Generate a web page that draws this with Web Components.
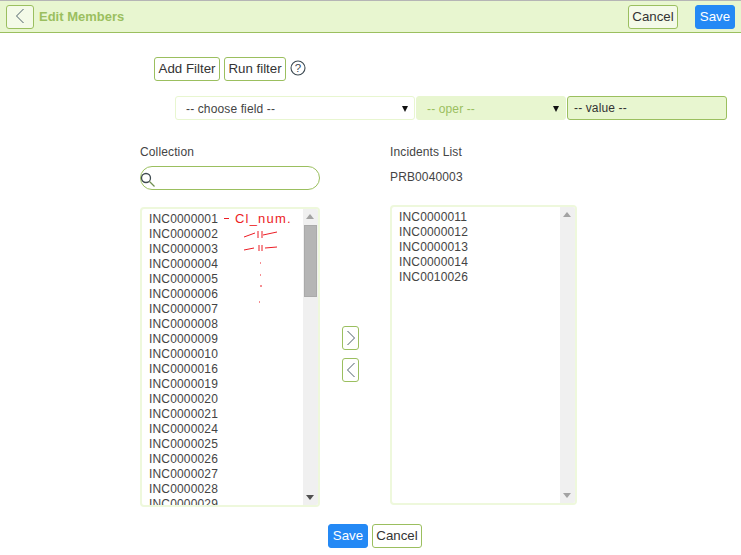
<!DOCTYPE html>
<html><head><meta charset="utf-8"><style>
html,body{margin:0;padding:0;background:#fff;overflow:hidden}
body{font:12px "Liberation Sans",Arial,sans-serif;color:#333;width:741px;height:555px}
</style></head><body>
<edit-page></edit-page>
<script>
const GL='#9bbf5f', LG='#e8f6d0';
function def(name,css,html,extra){
  customElements.define(name,class extends HTMLElement{
    constructor(){super();const s=this.attachShadow({mode:'open'});s.innerHTML='<style>'+css+'</style>'+html;}
    connectedCallback(){if(extra)extra.call(this);}
  });
}
const chevL='<svg width="10" height="16" viewBox="0 0 10 16"><path d="M8.5 1 1.5 8l7 7" fill="none" stroke="#4d5f6a" stroke-width="1"/></svg>';
const chevR='<svg width="10" height="16" viewBox="0 0 10 16"><path d="M1.5 1l7 7-7 7" fill="none" stroke="#4d5f6a" stroke-width="1"/></svg>';

def('x-btn',`:host{display:inline-flex;align-items:center;justify-content:center;box-sizing:border-box;height:24px;border:1px solid ${GL};border-radius:3px;background:#fff;color:#333;font:13.3px "Liberation Sans",Arial,sans-serif;white-space:nowrap;padding-bottom:1px}
:host([primary]){background:#2489f5;border-color:#2489f5;color:#fff}
:host([tint]){background:#f4fae8}`,'<slot></slot>');

def('x-header',`:host{display:flex;align-items:center;box-sizing:border-box;height:33px;background:${LG};border-top:1px solid #b5b5b5;border-bottom:1px solid ${GL};padding:0 6px}
h1{margin:0 0 0 5px;font:bold 13px "Liberation Sans",Arial,sans-serif;color:#9bbf5f;flex:1}
.g{width:17px}`,
`<x-btn style="width:28px" tint>${chevL}</x-btn><h1>Edit Members</h1><x-btn style="width:50px" tint>Cancel</x-btn><span class="g"></span><x-btn style="width:40px" primary>Save</x-btn>`);

def('x-select',`:host{display:flex;align-items:center;box-sizing:border-box;height:24px;border:1px solid ${LG};border-radius:3px;background:#fff;color:#444;font:12px "Liberation Sans",Arial,sans-serif;letter-spacing:.13px;padding:1px 6px 0 10px}
:host([tone="green"]){background:${LG};color:#9bbf5f}
:host([tone="input"]){background:${LG};border-color:${GL};color:#333;padding:0 6px}
span{flex:1}
i{width:0;height:0;border:3.5px solid transparent;border-top:6px solid #111;border-bottom:0}
:host([tone="input"]) i{display:none}`,'<span><slot></slot></span><i></i>');

def('x-list',`:host{display:block;position:relative;box-sizing:border-box;height:300px;border:2px solid #eef8dc;border-radius:4px;background:#fff;overflow:hidden}
.wrap{position:absolute;inset:0;overflow:hidden}
.items{padding:3px 0 0 7px;font:12px/15px "Liberation Sans",Arial,sans-serif;letter-spacing:.16px;color:#444}
.bar{position:absolute;top:0;right:0;bottom:0;width:15px;background:#f0f0f0}
.up,.dn{position:absolute;left:3px;width:0;height:0;border:4.5px solid transparent}
.up{top:5px;border-top:0;border-bottom:5px solid #a3a3a3}
.dn{bottom:5px;border-bottom:0;border-top:5px solid #505050}
:host([empty-bar]) .dn{border-top-color:#a3a3a3}
.thumb{position:absolute;left:1px;right:1px;top:16px;height:72px;background:#b5b5b5;border:1px solid #aaa;box-sizing:border-box}
:host([empty-bar]) .thumb{display:none}`,
`<div class="wrap"><div class="items"><slot></slot></div></div><div class="bar"><div class="up"></div><div class="thumb"></div><div class="dn"></div></div><slot name="over"></slot>`);

def('x-scribble',`:host{position:absolute;left:82px;top:2px;width:80px;height:100px;pointer-events:none}
svg{position:absolute;left:0;top:0}
span{position:absolute;left:11px;top:1px;font:13px/14px "Liberation Sans",sans-serif;letter-spacing:1.2px;color:#ec1c24;white-space:nowrap}`,
`<svg width="80" height="100" fill="none" stroke="#ec1c24" stroke-width="1"><path d="M0 7.500h5M20 26l11-4M34 20v7M38 20v7M39 24l14-3M20 39l10-2M35 34v6M38 34v6M41 37l12-1"/><path d="M36 52h1M36 64h1M37 74v2M35 91h1"/></svg><span>Cl_num.</span>`);

def('x-search',`:host{display:block;position:relative;box-sizing:border-box;height:24px;border:1px solid ${GL};border-radius:12px;background:#fff}
svg{position:absolute;left:-1px;top:4px}`,
`<svg width="17" height="18" viewBox="0 0 17 18" fill="none" stroke="#3f4a50"><circle cx="6" cy="7" r="4.500" stroke-width="1.300"/><path d="M9.500 10.500l5 5" stroke="#6f8f50" stroke-width="1.300"/></svg>`);

def('x-help',`:host{display:inline-flex;width:16px;height:16px;margin-top:-2px}`,
`<svg width="16" height="16" viewBox="0 0 16 16" fill="none"><circle cx="8" cy="8" r="7" stroke="#3d4a52" stroke-width="1.100"/><text x="8" y="12" text-anchor="middle" font-family="Liberation Sans,Arial,sans-serif" font-size="11.500" fill="#3d4a52">?</text></svg>`);

const ids=['0000001','0000002','0000003','0000004','0000005','0000006','0000007','0000008','0000009','0000010','0000016','0000019','0000020','0000021','0000024','0000025','0000026','0000027','0000028','0000029'];
const rows=a=>a.map(i=>'<div>INC'+i+'</div>').join('');

def('edit-page',`:host{display:block;color:#444;font:12px "Liberation Sans",Arial,sans-serif}
.filters{display:flex;align-items:center;gap:4px;padding:24px 0 0 154px}
.fields{display:flex;gap:1px;padding:15px 0 0 175px}
.main{display:grid;grid-template-columns:180px 70px 187px;padding:25px 0 0 140px}
.lbl{height:15px;line-height:15px;margin-bottom:6px;letter-spacing:.13px;font-size:12px}
.ref{height:15px;line-height:15px;letter-spacing:.13px;margin-bottom:20px;margin-top:10px}
.col x-search{margin-bottom:17px}
.mid{display:flex;flex-direction:column;align-items:flex-start;gap:8px;padding:181px 0 0 22px}
.foot{display:flex;justify-content:flex-start;gap:4px;padding:17px 0 0 328px}`,
`<x-header></x-header>
<div class="filters"><x-btn style="width:66px">Add Filter</x-btn><x-btn style="width:62px">Run filter</x-btn><x-help></x-help></div>
<div class="fields"><x-select style="width:240px">-- choose field --</x-select><x-select tone="green" style="width:150px">-- oper --</x-select><x-select tone="input" style="width:160px">-- value --</x-select></div>
<div class="main">
 <div class="col"><div class="lbl">Collection</div><x-search></x-search>
  <x-list></x-list></div>
 <div class="mid"><x-btn style="width:17px">${chevR}</x-btn><x-btn style="width:17px">${chevL}</x-btn></div>
 <div class="col"><div class="lbl">Incidents List</div><div class="ref">PRB0040003</div><x-list empty-bar></x-list></div>
</div>
<div class="foot"><x-btn style="width:40px" primary>Save</x-btn><x-btn style="width:50px">Cancel</x-btn></div>`,
function(){
  const ls=this.shadowRoot.querySelectorAll('x-list');
  ls[0].innerHTML=rows(ids)+'<x-scribble slot="over"></x-scribble>';
  ls[1].innerHTML=rows(['0000011','0000012','0000013','0000014','0010026']);
});
</script>
</body></html>
